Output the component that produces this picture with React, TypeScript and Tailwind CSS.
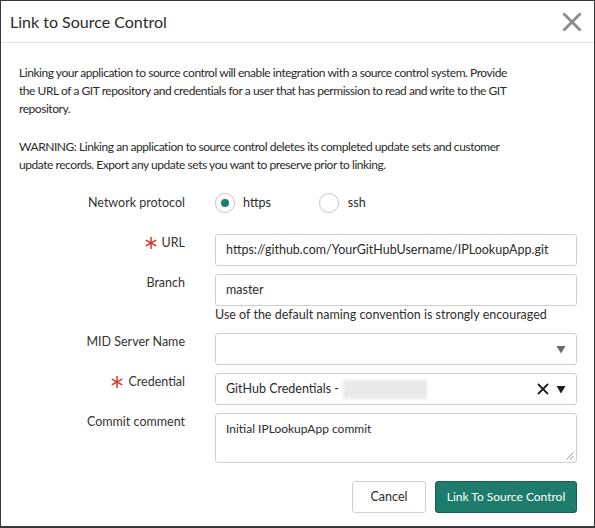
import React from "react";

function Asterisk() {
  return (
    <svg width="12" height="12" viewBox="0 0 12 12" className="inline-block mr-[5px] -mt-[2px]">
      <g stroke="#d8352a" strokeWidth="1.5" strokeLinecap="round">
        <line x1="6" y1="0.6" x2="6" y2="11.4" />
        <line x1="1.3" y1="3.3" x2="10.7" y2="8.7" />
        <line x1="1.3" y1="8.7" x2="10.7" y2="3.3" />
      </g>
    </svg>
  );
}

function Caret({ color = "#1f1f1f" }: { color?: string }) {
  return (
    <svg width="10" height="9" viewBox="0 0 10 9">
      <path d="M0.5 1 L9.5 1 L5 8.5 Z" fill={color} />
    </svg>
  );
}

function Row({
  label,
  required,
  children,
  className = "",
}: {
  label: string;
  required?: boolean;
  children: React.ReactNode;
  className?: string;
}) {
  return (
    <div className={"flex gap-[30px] " + className}>
      <div className="w-[166px] shrink-0 text-right text-[12.5px] leading-[18px] text-[#333]">
        {required && <Asterisk />}
        {label}
      </div>
      <div className="flex-1 min-w-0">{children}</div>
    </div>
  );
}

const inputCls =
  "h-[32px] w-full rounded-[3px] border border-[#cfcfcf] bg-white px-[10px] flex items-center text-[12.5px] text-[#2b2b2b]";

export default function App() {
  return (
    <div className="w-[595px] h-[528px] bg-white border border-[#3a3a3a] border-b-2 flex flex-col font-['Source_Sans_Pro','Lato',sans-serif] text-[#2a2a2a]">
      <div className="h-[42px] shrink-0 border-b border-[#e3e3e3] flex items-center justify-between pl-[9px] pr-[12px]">
        <h1 className="text-[16px] text-[#2b2b2b]">Link to Source Control</h1>
        <svg width="20" height="20" viewBox="0 0 20 20">
          <g stroke="#8c8c8c" strokeWidth="2.8">
            <line x1="1.5" y1="1.5" x2="18.5" y2="18.5" />
            <line x1="18.5" y1="1.5" x2="1.5" y2="18.5" />
          </g>
        </svg>
      </div>

      <div className="pl-[18px] pr-[17px] pt-[21px]">
        <p className="text-[12px] leading-[18px] tracking-[-0.45px]">
          Linking your application to source control will enable integration with a source control system. Provide
          <br />
          the URL of a GIT repository and credentials for a user that has permission to read and write to the GIT
          <br />
          repository.
        </p>
        <p className="mt-[20px] text-[12px] leading-[18px] tracking-[-0.45px]">
          WARNING: Linking an application to source control deletes its completed update sets and customer
          <br />
          update records. Export any update sets you want to preserve prior to linking.
        </p>

        <Row label="Network protocol" className="mt-[19px] items-center">
          <div className="flex items-center text-[12.5px] text-[#2b2b2b]">
            <span className="w-[20px] h-[20px] rounded-full border border-[#c9c9c9] shadow-[0_0_1px_rgba(0,0,0,0.15)] flex items-center justify-center">
              <span className="w-[8px] h-[8px] rounded-full bg-[#1d7f6d]" />
            </span>
            <span className="ml-[8px]">https</span>
            <span className="ml-[48px] w-[20px] h-[20px] rounded-full border border-[#c9c9c9] shadow-[0_0_1px_rgba(0,0,0,0.15)]" />
            <span className="ml-[9px]">ssh</span>
          </div>
        </Row>

        <Row label="URL" required className="mt-[21px]">
          <div className={inputCls}>https://github.com/YourGitHubUsername/IPLookupApp.git</div>
        </Row>

        <Row label="Branch" className="mt-[8px]">
          <div className={inputCls}>master</div>
          <div className="text-[12.5px] leading-[18px] text-[#2e2e2e]">
            Use of the default naming convention is strongly encouraged
          </div>
        </Row>

        <Row label="MID Server Name" className="mt-[9px]">
          <div className={inputCls + " justify-end pr-[10px]"}>
            <Caret color="#6b6b6b" />
          </div>
        </Row>

        <Row label="Credential" required className="mt-[8px]">
          <div className={inputCls + " justify-between pr-[10px]"}>
            <div className="flex items-center">
              <span>GitHub Credentials -</span>
              <span className="ml-[4px] w-[84px] h-[19px] bg-[#e9e9e9] blur-[1.5px]" />
            </div>
            <div className="flex items-center gap-[7px]">
              <svg width="12" height="12" viewBox="0 0 12 12">
                <g stroke="#1f1f1f" strokeWidth="1.8">
                  <line x1="1" y1="1" x2="11" y2="11" />
                  <line x1="11" y1="1" x2="1" y2="11" />
                </g>
              </svg>
              <Caret />
            </div>
          </div>
        </Row>

        <Row label="Commit comment" className="mt-[8px]">
          <div className="relative h-[50px] w-full rounded-[3px] border border-[#cfcfcf] px-[10px] pt-[6px] text-[12px] leading-[18px] text-[#2b2b2b]">
            Initial IPLookupApp commit
            <svg width="8" height="8" viewBox="0 0 8 8" className="absolute right-[2px] bottom-[2px]">
              <g stroke="#9a9a9a" strokeWidth="1">
                <line x1="7.5" y1="0.5" x2="0.5" y2="7.5" />
                <line x1="7.5" y1="4" x2="4" y2="7.5" />
              </g>
            </svg>
          </div>
        </Row>

        <div className="mt-[18px] flex justify-end gap-[9px]">
          <button className="h-[32px] w-[74px] rounded-[3px] border border-[#cfcfcf] bg-white text-[12.5px] text-[#2b2b2b]">
            Cancel
          </button>
          <button className="h-[32px] w-[142px] rounded-[3px] border border-[#155e52] bg-[#1e7c6c] text-[12px] text-white whitespace-nowrap">
            Link To Source Control
          </button>
        </div>
      </div>
    </div>
  );
}
